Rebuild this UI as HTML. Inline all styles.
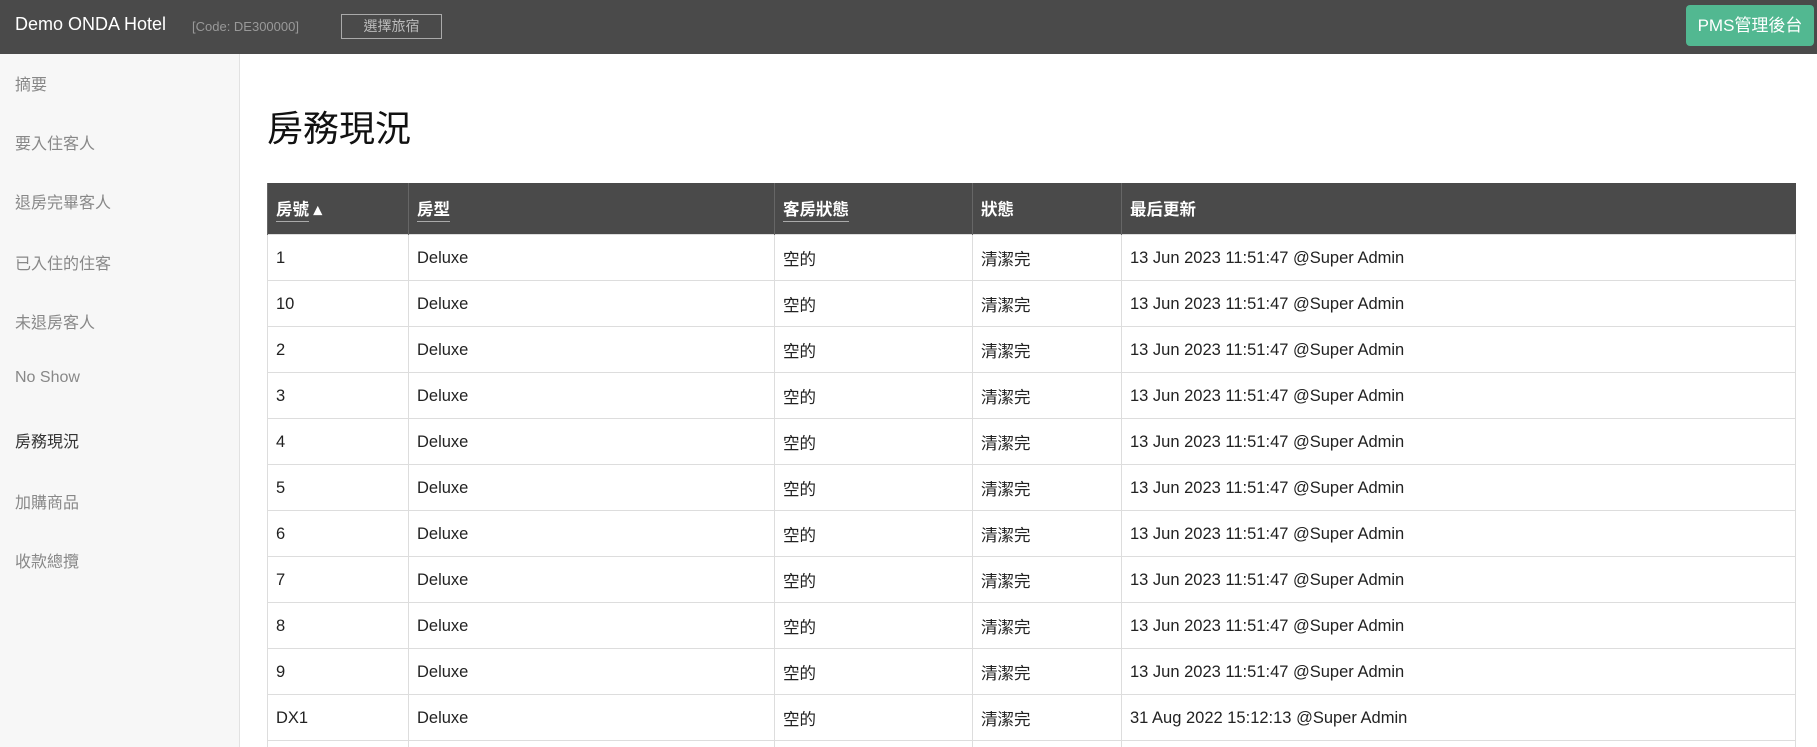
<!DOCTYPE html>
<html style="width:1817px;height:747px;overflow:hidden"><head><meta charset="utf-8"><style>
*{margin:0;padding:0;box-sizing:border-box}
body{width:1817px;height:747px;overflow:hidden;background:#fff;font-family:"Liberation Sans","Noto Sans CJK TC",sans-serif;position:relative}
.top{position:absolute;left:0;top:0;width:1817px;height:54px;background:#4a4a4a}
.brand{position:absolute;left:15px;top:14px;color:#fff;font-size:18px}
.code{position:absolute;left:192px;top:19px;color:#999;font-size:13px}
.sel{position:absolute;left:341px;top:14px;width:101px;height:25px;border:1px solid #aaa;color:#bbb;font-size:14px;text-align:center;line-height:23px}
.pms{position:absolute;left:1686px;top:5px;width:128px;height:41px;background:#52b891;border-radius:4px;color:#fff;font-size:17px;text-align:center;line-height:41px}
.side{position:absolute;left:0;top:54px;width:240px;height:693px;background:#f7f7f7;border-right:1px solid #e2e2e2}
.side div{position:absolute;left:15px;font-size:16px;color:#888}
h1{position:absolute;left:267px;top:100px;font-size:36px;font-weight:normal;color:#111}
.clip{position:absolute;left:267px;top:183px;width:1530px;height:564px;overflow:hidden}
table{width:1529px;border-collapse:collapse;font-size:16.5px;color:#222}
th{background:#4a4a4a;color:#fff;height:51px;text-align:left;padding-left:8px;font-size:16.5px;border-left:1px solid #666}
th span{border-bottom:1px solid #aaa;padding-bottom:2px}
td{height:46px;padding-left:8px;border:1px solid #ddd;padding-top:2px}
</style></head><body>
<div class="top"><div class="brand">Demo ONDA Hotel</div><div class="code">[Code: DE300000]</div><div class="sel">選擇旅宿</div><div class="pms">PMS管理後台</div></div>
<div class="side">
<div style="top:17px">摘要</div><div style="top:76px">要入住客人</div><div style="top:135px">退房完畢客人</div><div style="top:196px">已入住的住客</div><div style="top:255px">未退房客人</div><div style="top:315px">No Show</div><div style="top:374px;color:#333">房務現況</div><div style="top:435px">加購商品</div><div style="top:494px">收款總攬</div>
</div>
<h1>房務現況</h1>
<div class="clip">
<table>
<tr><th style="width:141px"><span>房號</span> ▴</th><th style="width:366px"><span>房型</span></th><th style="width:198px"><span>客房狀態</span></th><th style="width:149px">狀態</th><th>最后更新</th></tr>
<tr><td>1</td><td>Deluxe</td><td>空的</td><td>清潔完</td><td>13 Jun 2023 11:51:47 @Super Admin</td></tr>
<tr><td>10</td><td>Deluxe</td><td>空的</td><td>清潔完</td><td>13 Jun 2023 11:51:47 @Super Admin</td></tr>
<tr><td>2</td><td>Deluxe</td><td>空的</td><td>清潔完</td><td>13 Jun 2023 11:51:47 @Super Admin</td></tr>
<tr><td>3</td><td>Deluxe</td><td>空的</td><td>清潔完</td><td>13 Jun 2023 11:51:47 @Super Admin</td></tr>
<tr><td>4</td><td>Deluxe</td><td>空的</td><td>清潔完</td><td>13 Jun 2023 11:51:47 @Super Admin</td></tr>
<tr><td>5</td><td>Deluxe</td><td>空的</td><td>清潔完</td><td>13 Jun 2023 11:51:47 @Super Admin</td></tr>
<tr><td>6</td><td>Deluxe</td><td>空的</td><td>清潔完</td><td>13 Jun 2023 11:51:47 @Super Admin</td></tr>
<tr><td>7</td><td>Deluxe</td><td>空的</td><td>清潔完</td><td>13 Jun 2023 11:51:47 @Super Admin</td></tr>
<tr><td>8</td><td>Deluxe</td><td>空的</td><td>清潔完</td><td>13 Jun 2023 11:51:47 @Super Admin</td></tr>
<tr><td>9</td><td>Deluxe</td><td>空的</td><td>清潔完</td><td>13 Jun 2023 11:51:47 @Super Admin</td></tr>
<tr><td>DX1</td><td>Deluxe</td><td>空的</td><td>清潔完</td><td>31 Aug 2022 15:12:13 @Super Admin</td></tr>
<tr><td>DX2</td><td>Deluxe</td><td>空的</td><td>清潔完</td><td>31 Aug 2022 15:12:13 @Super Admin</td></tr>
</table>
</div>
</body></html>
